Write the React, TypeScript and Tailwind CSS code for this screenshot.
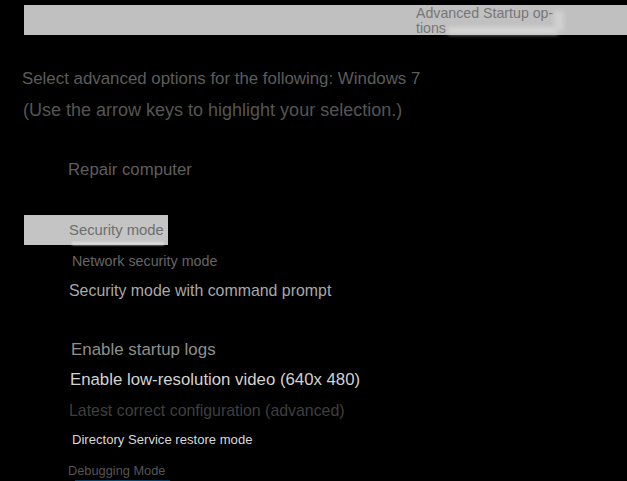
export default function App() {
  return (
    <div className="relative flex h-[481px] w-[627px] flex-col overflow-hidden bg-black font-['Liberation_Sans',Arial,sans-serif]">
      <div className="relative ml-6 mt-[5px] flex h-[30px] shrink-0 bg-[#c0c0c0] pl-[392px] text-[14.2px] leading-[15px] text-[#777777]">
        <div className="pt-px">
          Advanced Startup op-
          <br />
          tions
        </div>
        <div className="absolute left-[424px] top-[22px] h-[7px] w-[110px] bg-[#d6d6d6] blur-[2px]" />
        <div className="absolute left-[530px] top-[6px] h-[20px] w-[10px] bg-[#d0d0d0] blur-[2px]" />
      </div>
      <div className="ml-[22px] mt-[34px] h-5 shrink-0 text-[16.87px] leading-5 text-[#5c5c5c]">
        Select advanced options for the following: Windows 7
      </div>
      <div className="ml-[23px] mt-[11px] h-5 shrink-0 text-[18px] leading-5 text-[#555555]">
        (Use the arrow keys to highlight your selection.)
      </div>
      <div className="ml-[68px] mt-[40px] h-5 shrink-0 text-[16.75px] leading-5 text-[#5e5e5e]">Repair computer</div>
      <div className="relative ml-6 mt-[35px] flex h-[30px] w-[144px] shrink-0 items-center bg-[#c4c4c4] pl-[45px] text-[14.85px] text-[#6e6e6e]">
        Security mode
        <div className="absolute bottom-0 left-[48px] h-[3px] w-[92px] bg-[#dcdcdc] blur-[1px]" />
      </div>
      <div className="ml-[72px] mt-[8px] h-4 shrink-0 text-[14.3px] leading-4 text-[#666666]">Network security mode</div>
      <div className="ml-[69px] mt-[13px] h-[18px] shrink-0 text-[15.9px] leading-[18px] text-[#a8a8a8]">
        Security mode with command prompt
      </div>
      <div className="ml-[71px] mt-[40px] h-5 shrink-0 text-[16.9px] leading-5 text-[#8f8f8f]">Enable startup logs</div>
      <div className="ml-[70px] mt-[10px] h-5 shrink-0 text-[16.8px] leading-5 text-[#d2d2d2]">
        Enable low-resolution video (640x 480)
      </div>
      <div className="ml-[69px] mt-[11px] h-5 shrink-0 text-[15.9px] leading-5 text-[#3f3f3f]">
        Latest correct configuration (advanced)
      </div>
      <div className="ml-[72px] mt-[11px] h-4 shrink-0 text-[13.1px] leading-4 text-[#d8d8d8]">
        Directory Service restore mode
      </div>
      <div className="ml-[68px] mt-[15px] h-4 shrink-0 text-[12.8px] leading-4 text-[#555555]">Debugging Mode</div>
      <div className="ml-[75px] mt-[1px] h-[2px] w-[95px] shrink-0 bg-gradient-to-r from-[#0a3a5e] via-[#124a70] to-[#0a3a5e]" />
    </div>
  );
}
